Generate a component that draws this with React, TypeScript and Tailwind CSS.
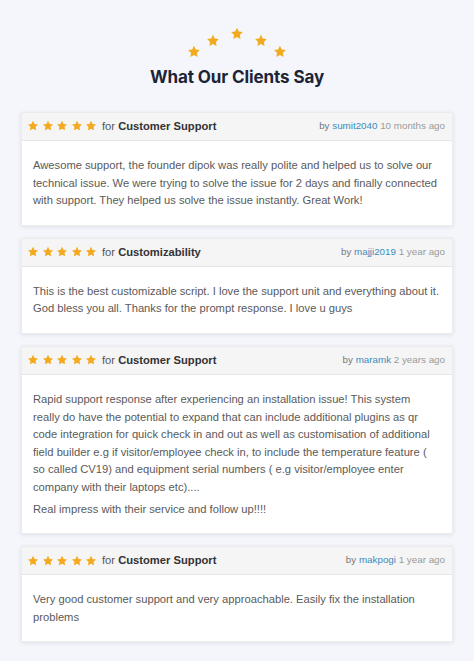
import React from "react";

const STAR = "M12 1.5l3.09 6.26 6.91 1-5 4.87 1.18 6.88L12 17.27l-6.18 3.24L7 13.63 2 8.76l6.91-1L12 1.5z";

function Star({ size = 12, color = "#f4a91e" }: { size?: number; color?: string }) {
  return (
    <svg width={size} height={size} viewBox="0 0 24 24" className="block shrink-0">
      <path d={STAR} fill={color} />
    </svg>
  );
}

type Review = {
  category: string;
  user: string;
  time: string;
  paragraphs: string[][];
};

const reviews: Review[] = [
  {
    category: "Customer Support",
    user: "sumit2040",
    time: "10 months ago",
    paragraphs: [
      [
        "Awesome support, the founder dipok was really polite and helped us to solve our technical issue. We were trying to solve the issue for 2 days and finally connected with support. They helped us solve the issue instantly. Great Work!",
      ],
    ],
  },
  {
    category: "Customizability",
    user: "majji2019",
    time: "1 year ago",
    paragraphs: [
      [
        "This is the best customizable script. I love the support unit and everything about it. God bless you all. Thanks for the prompt response. I love u guys",
      ],
    ],
  },
  {
    category: "Customer Support",
    user: "maramk",
    time: "2 years ago",
    paragraphs: [
      [
        "Rapid support response after experiencing an installation issue! This system",
        "really do have the potential to expand that can include additional plugins as qr",
        "code integration for quick check in and out as well as customisation of additional",
        "field builder e.g if visitor/employee check in, to include the temperature feature (",
        "so called CV19) and equipment serial numbers ( e.g visitor/employee enter",
        "company with their laptops etc)....",
      ],
      ["Real impress with their service and follow up!!!!"],
    ],
  },
  {
    category: "Customer Support",
    user: "makpogi",
    time: "1 year ago",
    paragraphs: [
      [
        "Very good customer support and very approachable. Easily fix the installation problems",
      ],
    ],
  },
];

function ReviewCard({ r }: { r: Review }) {
  return (
    <div className="bg-white shadow-[0_1px_4px_rgba(30,40,80,0.10)] border border-[#ececec]">
      <div className="h-[28px] bg-[#f5f5f5] border-b border-[#e6e6e6] flex items-center justify-between pl-[5px] pr-[7px]">
        <div className="flex items-center">
          <div className="flex items-center gap-[2.5px]">
            <Star />
            <Star />
            <Star />
            <Star />
            <Star />
          </div>
          <span className="ml-[5px] text-[#555]">
            for <span className="font-bold text-[#333]">{r.category}</span>
          </span>
        </div>
        <div className="text-[9.8px]">
          <span className="text-[#777]">by </span>
          <span className="text-[#3b8cbf]">{r.user}</span>
          <span className="text-[#9a9a9a]"> {r.time}</span>
        </div>
      </div>
      <div className="pt-[16px] pb-[15px] pl-[11px] pr-[10px] text-[#5a5a5a] leading-[17.6px]">
        {r.paragraphs.map((lines, i) => (
          <p key={i} className={i > 0 ? "mt-[4px]" : ""}>
            {lines.map((l, j) => (
              <React.Fragment key={j}>
                {j > 0 && <br />}
                {l}
              </React.Fragment>
            ))}
          </p>
        ))}
      </div>
    </div>
  );
}

export default function App() {
  const arc = [
    [10, 26],
    [29, 15],
    [53, 8],
    [77, 15],
    [96, 26],
  ];
  return (
    <div
      className="min-h-[661px] w-full bg-[#f4f6fb] pt-[26px] pb-[20px] text-[11.2px]"
      style={{ fontFamily: '"Liberation Sans", Arial, sans-serif' }}
    >
      <div className="flex justify-center">
        <svg width="106" height="34" viewBox="0 0 106 34" className="block">
          {arc.map(([x, y], i) => (
            <g key={i} transform={`translate(${x - 7} ${y - 7}) scale(0.58)`}>
              <path d={STAR} fill="#f2aa1f" />
            </g>
          ))}
        </svg>
      </div>
      <h1
        className="mt-[5px] text-center text-[17px] leading-[24px] font-bold text-[#1c2536] tracking-[-0.1px]"
        style={{ fontFamily: 'Inter, "Noto Sans", sans-serif' }}
      >
        What Our Clients Say
      </h1>
      <div className="w-[432px] mx-auto mt-[23px] flex flex-col gap-[12px]">
        {reviews.map((r, i) => (
          <ReviewCard key={i} r={r} />
        ))}
      </div>
    </div>
  );
}
